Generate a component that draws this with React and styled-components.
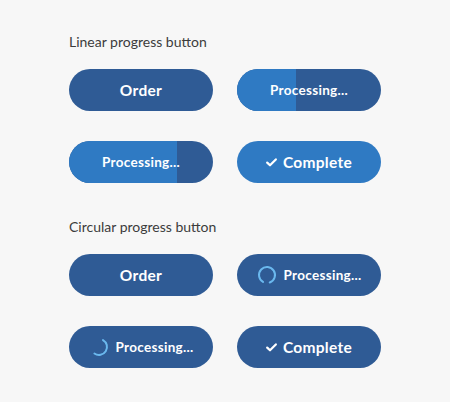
import React from "react";
import styled, { createGlobalStyle } from "styled-components";

// Colours used by the progress buttons
const DARK = "#2f5b95";
const LIGHT = "#2f7ac3";
const SPIN = "#6ab8ee";

const GlobalStyle = createGlobalStyle`
  body {
    margin: 0;
    background: #f7f7f7;
    font-family: Lato, "Open Sans", sans-serif;
  }
`;

const Page = styled.div`
  padding: 34px 0 0 69px;
  display: flex;
  flex-direction: column;
  gap: 36px;
`;

const Section = styled.section`
  display: flex;
  flex-direction: column;
`;

const Label = styled.h3`
  margin: 0 0 19px;
  font-size: 14px;
  line-height: 16px;
  font-weight: 400;
  color: #3c3c3c;
`;

const Grid = styled.div`
  display: grid;
  grid-template-columns: 144px 144px;
  column-gap: 24px;
  row-gap: 30px;
`;

const Button = styled.button`
  position: relative;
  overflow: hidden;
  height: 42px;
  border: none;
  border-radius: 21px;
  padding: 0;
  background: ${(p) => (p.$light ? LIGHT : DARK)};
  color: #fff;
  font-family: inherit;
  cursor: pointer;
`;

// Light fill that grows over the dark base while processing
const Fill = styled.span`
  position: absolute;
  left: 0;
  top: 0;
  bottom: 0;
  width: ${(p) => p.$progress}%;
  background: ${LIGHT};
`;

const Content = styled.span`
  position: relative;
  display: flex;
  align-items: center;
  justify-content: center;
  gap: ${(p) => (p.$gap ? p.$gap : 6)}px;
  height: 100%;
  font-size: ${(p) => (p.$big ? 15.5 : 13.5)}px;
  font-weight: 700;
  letter-spacing: 0.3px;
`;

const Spinner = ({ start, end }) => {
  // arc from angle start to end (degrees, clockwise from 12 o'clock)
  const r = 8;
  const pt = (a) => {
    const rad = ((a - 90) * Math.PI) / 180;
    return [10 + r * Math.cos(rad), 10 + r * Math.sin(rad)];
  };
  const [x1, y1] = pt(start);
  const [x2, y2] = pt(end);
  const large = end - start > 180 ? 1 : 0;
  return (
    <svg width="20" height="20" viewBox="0 0 20 20">
      <path
        d={`M${x1} ${y1} A${r} ${r} 0 ${large} 1 ${x2} ${y2}`}
        fill="none"
        stroke={SPIN}
        strokeWidth="2"
        strokeLinecap="round"
      />
    </svg>
  );
};

const Check = () => (
  <svg width="11" height="9" viewBox="0 0 11 9">
    <path d="M1.2 4.6 L4 7.3 L9.8 1.4" fill="none" stroke="#fff" strokeWidth="2.2" strokeLinecap="round" strokeLinejoin="round" />
  </svg>
);

const Complete = ({ light }) => (
  <Button $light={light}>
    <Content $big $gap={6}>
      <Check />
      Complete
    </Content>
  </Button>
);

const App = () => (
  <>
    <GlobalStyle />
    <Page>
      <Section>
        <Label>Linear progress button</Label>
        <Grid>
          <Button>
            <Content $big>Order</Content>
          </Button>
          <Button>
            <Fill $progress={41} />
            <Content>Processing...</Content>
          </Button>
          <Button>
            <Fill $progress={75} />
            <Content>Processing...</Content>
          </Button>
          <Complete light />
        </Grid>
      </Section>
      <Section>
        <Label>Circular progress button</Label>
        <Grid>
          <Button>
            <Content $big>Order</Content>
          </Button>
          <Button>
            <Content $gap={7}>
              <Spinner start={-150} end={160} />
              Processing...
            </Content>
          </Button>
          <Button>
            <Content $gap={7}>
              <Spinner start={30} end={215} />
              Processing...
            </Content>
          </Button>
          <Complete />
        </Grid>
      </Section>
    </Page>
  </>
);

export default App;
